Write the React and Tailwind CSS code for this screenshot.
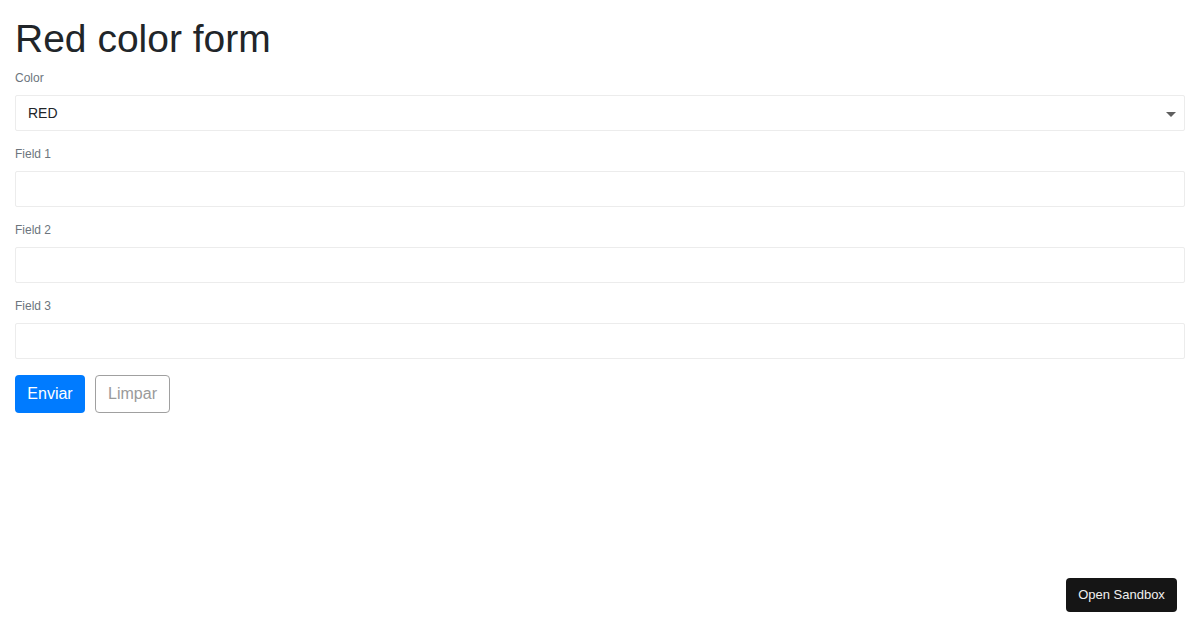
import React from "react";

function Field({ label, children }) {
  return (
    <div className="mb-[15px]">
      <label className="block text-[12px] leading-[16px] text-[#6c757d] mb-[9px]">{label}</label>
      {children}
    </div>
  );
}

export default function App() {
  return (
    <div className="min-h-[630px] bg-white px-[15px] pt-[15px] relative" style={{ fontFamily: '"Liberation Sans", Arial, sans-serif' }}>
      <h1 className="text-[39px] leading-[48px] text-[#212529] font-normal mb-[7px]">Red color form</h1>
      <Field label="Color">
        <div className="relative h-[36px] border border-[#ececec] rounded-[2px] flex items-center pl-[12px] text-[14px] text-[#212529]">
          RED
          <svg className="absolute right-[8px] top-[16px]" width="10" height="5" viewBox="0 0 10 5">
            <path d="M0 0 H10 L5 5 Z" fill="#5f5f5f" />
          </svg>
        </div>
      </Field>
      <Field label="Field 1">
        <input className="block w-full h-[36px] border border-[#ececec] rounded-[2px] outline-none px-[12px] text-[14px]" />
      </Field>
      <Field label="Field 2">
        <input className="block w-full h-[36px] border border-[#ececec] rounded-[2px] outline-none px-[12px] text-[14px]" />
      </Field>
      <Field label="Field 3">
        <input className="block w-full h-[36px] border border-[#ececec] rounded-[2px] outline-none px-[12px] text-[14px]" />
      </Field>
      <div className="flex gap-[10px] pt-[1px]">
        <button className="h-[38px] w-[70px] rounded-[4px] bg-[#007bff] text-white text-[16px]">Enviar</button>
        <button className="h-[38px] w-[75px] rounded-[4px] border border-[#a0a0a0] text-[#9a9a9a] text-[16px] bg-white">Limpar</button>
      </div>
      <button className="fixed right-[23px] bottom-[18px] h-[34px] w-[111px] rounded-[4px] bg-[#151515] text-[#f0f0f0] text-[13px]">Open Sandbox</button>
    </div>
  );
}
